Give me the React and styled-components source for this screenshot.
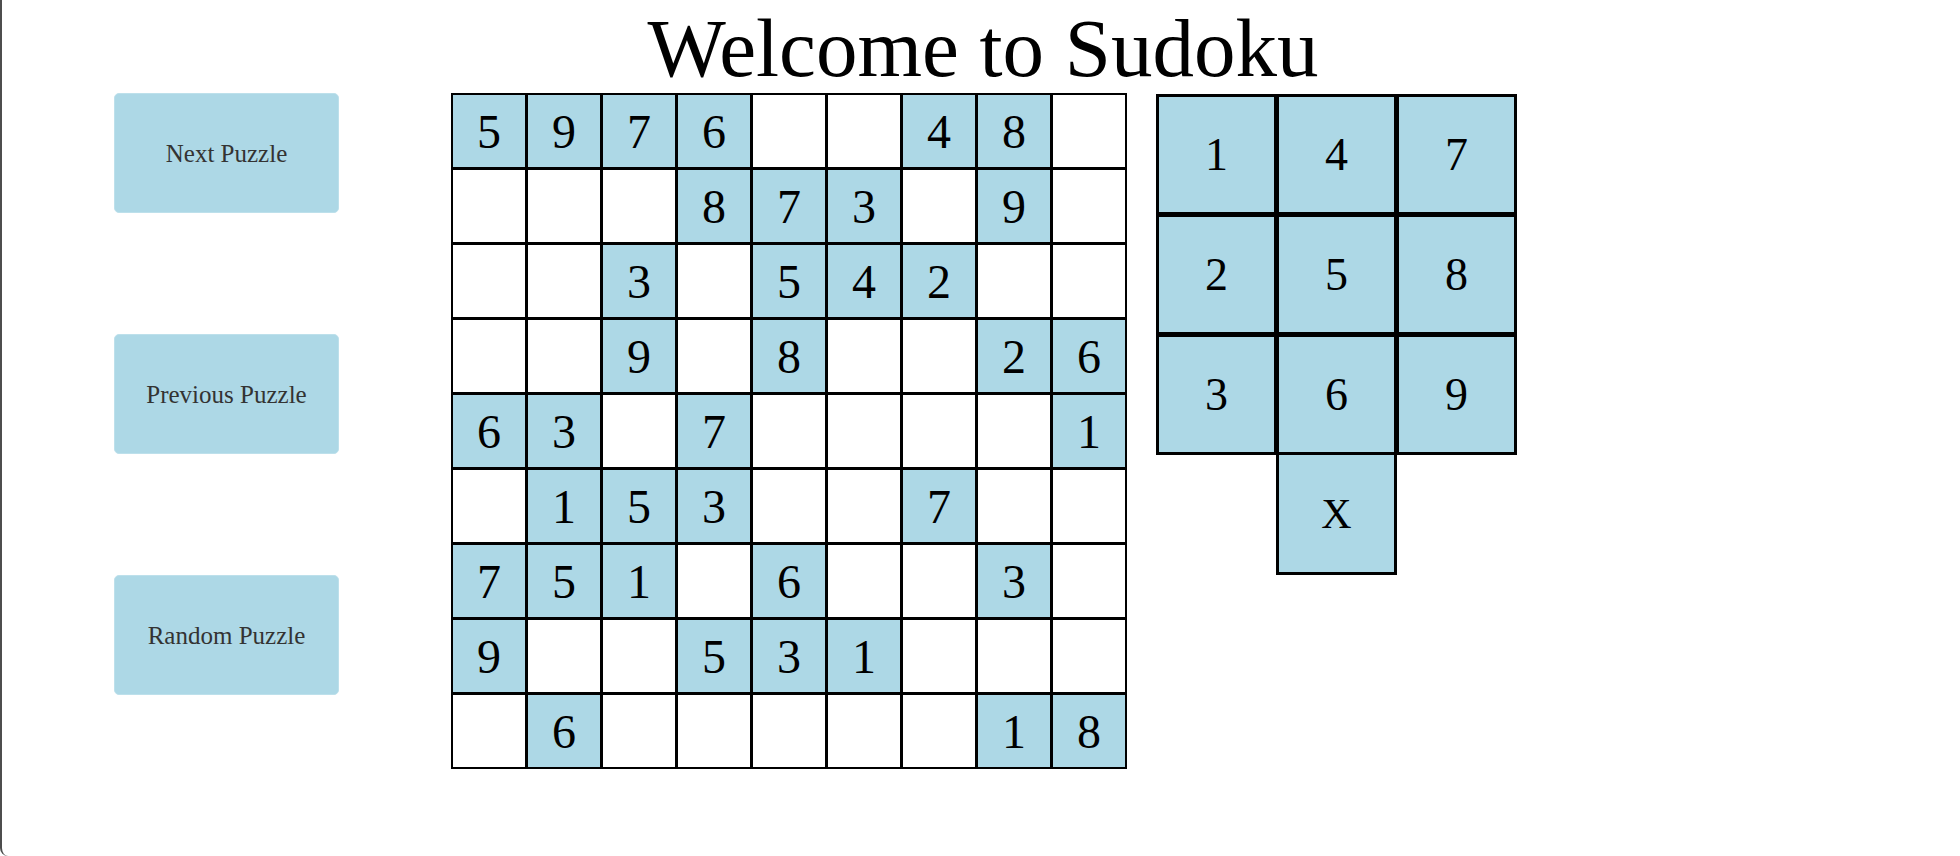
import React from "react";
import styled, { createGlobalStyle } from "styled-components";

const puzzle = [
  [5, 9, 7, 6, 0, 0, 4, 8, 0],
  [0, 0, 0, 8, 7, 3, 0, 9, 0],
  [0, 0, 3, 0, 5, 4, 2, 0, 0],
  [0, 0, 9, 0, 8, 0, 0, 2, 6],
  [6, 3, 0, 7, 0, 0, 0, 0, 1],
  [0, 1, 5, 3, 0, 0, 7, 0, 0],
  [7, 5, 1, 0, 6, 0, 0, 3, 0],
  [9, 0, 0, 5, 3, 1, 0, 0, 0],
  [0, 6, 0, 0, 0, 0, 0, 1, 8],
];

const padNumbers = [1, 4, 7, 2, 5, 8, 3, 6, 9];

const GlobalStyle = createGlobalStyle`
  html, body {
    margin: 0;
    padding: 0;
    background: #fff;
  }
  body {
    font-family: "Liberation Serif", "Times New Roman", serif;
  }
`;

const Page = styled.div`
  min-height: 856px;
  box-sizing: border-box;
  border-left: 2px solid #4d4d4d;
  border-bottom-left-radius: 8px;
`;

const Title = styled.h1`
  margin: 0;
  padding: 3px 0 0 4px;
  text-align: center;
  font-size: 83px;
  font-weight: 400;
  color: #000;
  line-height: 90px;
`;

const Main = styled.div`
  display: flex;
  align-items: flex-start;
  padding-left: 112px;
`;

const Controls = styled.div`
  display: flex;
  flex-direction: column;
  gap: 121px;
  margin-right: 112px;
`;

const PuzzleButton = styled.button`
  width: 225px;
  height: 120px;
  padding-top: 3px;
  background: #add8e6;
  border: 1px solid #bde0eb;
  border-radius: 5px;
  color: #333;
  font-family: "Liberation Serif", serif;
  font-size: 25px;
  cursor: pointer;
`;

const Board = styled.div`
  display: grid;
  grid-template-columns: repeat(9, 72px);
  grid-auto-rows: 72px;
  gap: 3px;
  padding: 2px;
  background: #000;
`;

const Cell = styled.div`
  display: flex;
  align-items: center;
  justify-content: center;
  background: ${(p) => (p.$given ? "#add8e6" : "#fff")};
  font-size: 48px;
  color: #000;
`;

const PadColumn = styled.div`
  display: flex;
  flex-direction: column;
  align-items: center;
  margin-left: 29px;
  margin-top: 1px;
`;

const Pad = styled.div`
  display: grid;
  grid-template-columns: repeat(3, 115px);
  grid-auto-rows: 115px;
  gap: 5px;
  padding: 3px;
  background: #000;
`;

const PadKey = styled.div`
  display: flex;
  align-items: center;
  justify-content: center;
  background: #add8e6;
  font-size: 46px;
  color: #000;
`;

const ClearKey = styled(PadKey)`
  box-sizing: border-box;
  width: 121px;
  height: 120px;
  border: 3px solid #000;
  border-top: none;
  font-size: 42px;
`;

export default function App() {
  return (
    <Page>
      <GlobalStyle />
      <Title>Welcome to Sudoku</Title>
      <Main>
        <Controls>
          <PuzzleButton>Next Puzzle</PuzzleButton>
          <PuzzleButton>Previous Puzzle</PuzzleButton>
          <PuzzleButton>Random Puzzle</PuzzleButton>
        </Controls>
        <Board>
          {puzzle.flat().map((n, i) => (
            <Cell key={i} $given={n !== 0}>
              {n !== 0 ? n : ""}
            </Cell>
          ))}
        </Board>
        <PadColumn>
          <Pad>
            {padNumbers.map((n) => (
              <PadKey key={n}>{n}</PadKey>
            ))}
          </Pad>
          <ClearKey>X</ClearKey>
        </PadColumn>
      </Main>
    </Page>
  );
}
